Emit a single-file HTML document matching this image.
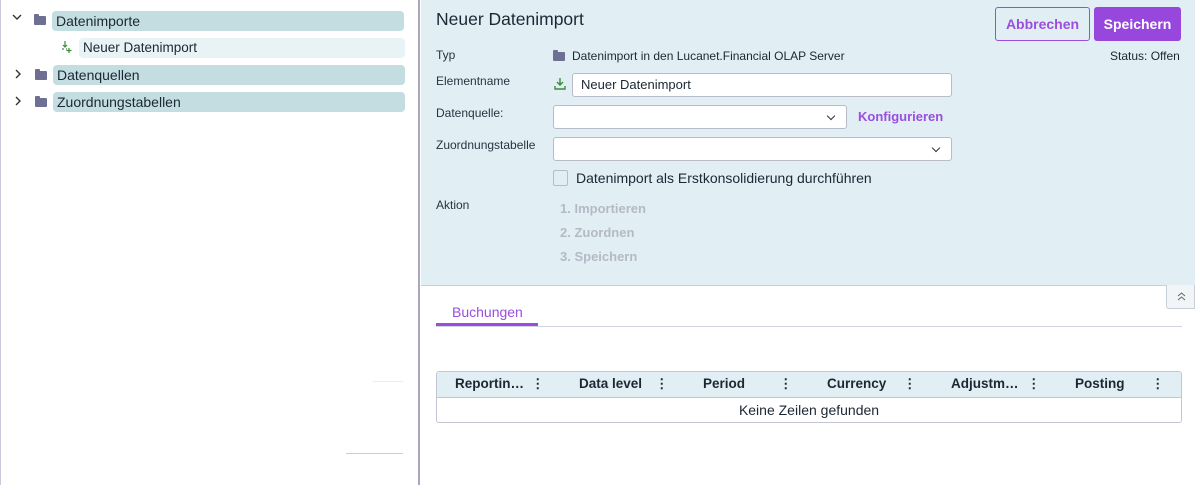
<!DOCTYPE html>
<html><head><meta charset="utf-8"><style>
*{box-sizing:border-box;margin:0;padding:0}
body{width:1195px;height:485px;background:#fff;font-family:"Liberation Sans",sans-serif;color:#1c2733;position:relative;overflow:hidden;font-size:13px}
.abs{position:absolute}
.left{left:0;top:0;width:420px;height:485px;border-left:1px solid #c8c8d8;border-right:2px solid #a9a7bf}
.node{position:absolute;height:20px;border-radius:4px;background:#c3dde1;font-size:14px;line-height:20px;padding-left:4px}
.folder{position:absolute;width:12px;height:9px;background:#6f6f93;border-radius:1px}
.folder:before{content:"";position:absolute;left:0;top:-2px;width:5px;height:3px;background:#6f6f93;border-radius:1px 1px 0 0}
.right{left:421px;top:0;width:774px;height:286px;background:#e1eff4;border-bottom:1px solid #c9cedb}
.lbl{position:absolute;font-size:12px;color:#2a3340}
.inp{position:absolute;background:#fff;border:1px solid #b8bcc8;border-radius:3px;height:24px;font-size:13px;line-height:22px;padding-left:8px}
.dd:after{content:"";position:absolute;right:12px;top:7px;width:5px;height:5px;border-right:1.3px solid #333;border-bottom:1.3px solid #333;transform:rotate(45deg)}
.step{position:absolute;left:560px;font-size:13px;font-weight:bold;color:#b5b9c6}
</style></head><body>
<div class="abs left">
  <svg class="abs" style="left:11px;top:14px" width="10" height="7" viewBox="0 0 10 7"><path d="M1 1l4 4 4-4" stroke="#333" stroke-width="1.4" fill="none"/></svg>
  <div class="folder" style="left:33px;top:16px"></div>
  <div class="node" style="left:51px;top:11px;width:352px">Datenimporte</div>
  <svg class="abs" style="left:60px;top:40px" width="12" height="14" viewBox="0 0 12 14"><path d="M4 1v6M2 5l2 2 2-2M1 9h2M5 9h1M8 8v5M5.5 10.5h5" stroke="#3c8a3c" stroke-width="1.2" fill="none"/></svg>
  <div class="node" style="left:78px;top:38px;width:326px;background:#e8f3f6;font-size:13.5px">Neuer Datenimport</div>
  <svg class="abs" style="left:14px;top:69px" width="7" height="10" viewBox="0 0 7 10"><path d="M1 1l4 4-4 4" stroke="#333" stroke-width="1.4" fill="none"/></svg>
  <div class="folder" style="left:34px;top:71px"></div>
  <div class="node" style="left:52px;top:65px;width:352px">Datenquellen</div>
  <svg class="abs" style="left:14px;top:96px" width="7" height="10" viewBox="0 0 7 10"><path d="M1 1l4 4-4 4" stroke="#333" stroke-width="1.4" fill="none"/></svg>
  <div class="folder" style="left:34px;top:98px"></div>
  <div class="node" style="left:52px;top:92px;width:352px">Zuordnungstabellen</div>
  <div class="abs" style="left:372px;top:381px;width:30px;height:1px;background:#e2f1f3"></div>
  <div class="abs" style="left:345px;top:453px;width:57px;height:1px;background:#c9cdd8"></div>
</div>
<div class="abs right"></div>
<div class="abs" style="left:436px;top:9px;font-size:17.5px">Neuer Datenimport</div>
<div class="abs" style="left:995px;top:7px;width:95px;height:34px;border:1px solid #9b4dde;border-radius:3px;color:#9b4dde;font-weight:bold;font-size:14px;text-align:center;line-height:32px">Abbrechen</div>
<div class="abs" style="left:1094px;top:7px;width:87px;height:34px;background:#9747dc;border-radius:3px;color:#fff;font-weight:bold;font-size:14px;text-align:center;line-height:34px">Speichern</div>
<div class="abs" style="left:1110px;top:49px;font-size:12px">Status: Offen</div>
<div class="lbl" style="left:436px;top:48px">Typ</div>
<div class="folder" style="left:553px;top:52px"></div>
<div class="abs" style="left:572px;top:49px;font-size:12px">Datenimport in den Lucanet.Financial OLAP Server</div>
<div class="lbl" style="left:436px;top:74px">Elementname</div>
<svg class="abs" style="left:554px;top:77px" width="12" height="13" viewBox="0 0 12 13"><path d="M6 1v7M3 5l3 3 3-3M1 9v3h10V9" stroke="#3c8a3c" stroke-width="1.4" fill="none"/></svg>
<div class="inp" style="left:572px;top:73px;width:380px">Neuer Datenimport</div>
<div class="lbl" style="left:436px;top:106px">Datenquelle:</div>
<div class="inp dd" style="left:553px;top:105px;width:294px"></div>
<div class="abs" style="left:858px;top:109px;font-size:13px;font-weight:bold;color:#9b4dde">Konfigurieren</div>
<div class="lbl" style="left:436px;top:138px">Zuordnungstabelle</div>
<div class="inp dd" style="left:553px;top:137px;width:399px"></div>
<div class="abs" style="left:553px;top:170px;width:15px;height:16px;border:1px solid #b8bcc8;border-radius:2px;background:#e1eff4"></div>
<div class="abs" style="left:576px;top:170px;font-size:14px">Datenimport als Erstkonsolidierung durchführen</div>
<div class="lbl" style="left:436px;top:198px">Aktion</div>
<div class="step" style="top:201px">1. Importieren</div>
<div class="step" style="top:225px">2. Zuordnen</div>
<div class="step" style="top:249px">3. Speichern</div>
<div class="abs" style="left:1166px;top:285px;width:29px;height:24px;border:1px solid #c9cedb;border-top:none;border-radius:0 0 0 3px;background:#f1f5f8"></div>
<svg class="abs" style="left:1177px;top:292px" width="9" height="9" viewBox="0 0 9 9"><path d="M1 4l3.5-3 3.5 3M1 8l3.5-3 3.5 3" stroke="#666" stroke-width="1" fill="none"/></svg>
<div class="abs" style="left:436px;top:326px;width:746px;height:1px;background:#d3d3de"></div>
<div class="abs" style="left:436px;top:323px;width:102px;height:3px;background:#9b4dde"></div>
<div class="abs" style="left:452px;top:304px;font-size:14px;color:#9b4dde">Buchungen</div>
<div class="abs" style="left:436px;top:371px;width:746px;height:52px;border:1px solid #c3c6d2;border-radius:3px;overflow:hidden">
  <div style="height:26px;background:#e1eff4;border-bottom:1px solid #c3c6d2;position:relative;font-weight:bold;font-size:13.5px">
    <span class="abs" style="left:18px;top:4px">Reportin…</span><span class="abs" style="left:94px;top:4px">⋮</span>
    <span class="abs" style="left:142px;top:4px">Data level</span><span class="abs" style="left:218px;top:4px">⋮</span>
    <span class="abs" style="left:266px;top:4px">Period</span><span class="abs" style="left:342px;top:4px">⋮</span>
    <span class="abs" style="left:390px;top:4px">Currency</span><span class="abs" style="left:466px;top:4px">⋮</span>
    <span class="abs" style="left:514px;top:4px">Adjustm…</span><span class="abs" style="left:590px;top:4px">⋮</span>
    <span class="abs" style="left:638px;top:4px">Posting</span><span class="abs" style="left:714px;top:4px">⋮</span>
  </div>
  <div style="text-align:center;font-size:14px;line-height:24px">Keine Zeilen gefunden</div>
</div>
</body></html>
